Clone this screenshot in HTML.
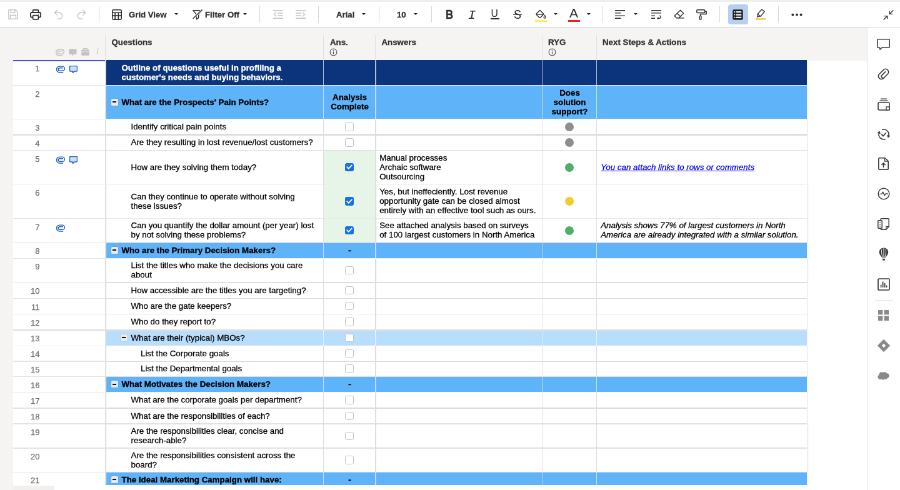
<!DOCTYPE html>
<html><head><meta charset="utf-8"><title>Sheet</title>
<style>
html,body{margin:0;padding:0;background:#fff;}
body{width:900px;height:490px;overflow:hidden;position:relative;font-family:"Liberation Sans",sans-serif;}
#clip{position:absolute;left:0;top:0;width:900px;height:490px;overflow:hidden;}
#app{position:absolute;left:0;top:0;width:1440px;height:784px;transform:scale(.625);transform-origin:0 0;will-change:transform;background:transparent;overflow:hidden;font-size:13.33px;color:#000;}
#topstrip{position:absolute;left:0;top:0;width:1440px;height:3px;background:#eceef2;}
#tb{position:absolute;left:0;top:3px;width:1440px;height:40px;background:#fff;border-bottom:1px solid #d6d6d6;}
#tb .i{position:absolute;top:0;}
#tb svg{position:absolute;overflow:visible;}
#tb .sep{position:absolute;top:6.500px;width:1.300px;height:26.500px;background:#d8d8d8;}
#tb .lbl{position:absolute;top:12.600px;-webkit-text-stroke:.3px;font-weight:bold;font-size:13.2px;line-height:16px;color:#333;white-space:nowrap;}
#tb .gl{position:absolute;color:#2f2f2f;white-space:nowrap;}
#tb .car{position:absolute;top:18px;width:0;height:0;border-left:3px solid transparent;border-right:3px solid transparent;border-top:3.800px solid #222;}
#hdr{position:absolute;left:0;top:44px;width:1387px;height:53px;background:#f5f4f2;}
#hdr .h{position:absolute;top:15.700px;-webkit-text-stroke:.3px;font-weight:bold;font-size:13.3px;line-height:16px;color:#333;white-space:nowrap;}
#hdr .vb{position:absolute;top:12px;height:40px;width:1px;background:#e2e1df;}
#hdr svg{position:absolute;}
#gutter{position:absolute;left:0;top:96px;width:21px;height:688px;background:#f5f4f2;}
#rpanel{position:absolute;left:1387px;top:44px;width:53px;height:740px;background:#fff;border-left:1px solid #e6e6e6;}
#rpanel svg{position:absolute;overflow:visible;}
.row{position:absolute;left:0;width:1292px;}
.rn{position:absolute;left:21px;top:0;width:148px;height:100%;background:#fff;}
.rn .num{position:absolute;right:105.500px;top:5.600px;font-size:13px;line-height:15px;color:#707070;-webkit-text-stroke:.25px;}
.rn .ri{position:absolute;top:9px;}
.bg{position:absolute;top:0;}
.c{position:absolute;top:0;bottom:1px;display:flex;align-items:center;overflow:hidden;}
.c.mid{justify-content:center;}
.vl{position:absolute;z-index:2;top:0;height:100%;width:1.200px;margin-left:.2px;background:#dedede;}
.hl{position:absolute;z-index:2;height:1.200px;margin-top:.2px;background:#dedede;}
.hl.rnh{background:#e4e4e4;}
.vl.rnv{background:#e0e0e0;}
.row.col .vl{background:rgba(255,255,255,.6);}
.row.dark .vl{background:rgba(255,255,255,.68);}
.row.col .vl.rnv,.row.dark .vl.rnv{background:#e0e0e0;}
.row.col .vl.endv,.row.dark .vl.endv{background:#ececec;}
.hl.chl{background:#eef0f2;height:1px;}
.t{display:block;position:relative;top:-.5px;line-height:15px;white-space:nowrap;-webkit-text-stroke:.3px;}
.t.ctr{text-align:center;}
.t a{color:#0000ee;text-decoration:underline;font-style:italic;}
.tog{position:absolute;top:50%;margin-top:-6px;width:11px;height:11px;background:#e9e9e9;border-radius:1.5px;box-shadow:0 0 0 .5px rgba(0,0,0,.12);}
.tog:after{content:"";position:absolute;left:2.5px;top:4.5px;width:6px;height:2px;background:#111;}
.cb{display:block;border:1.300px solid #c4c4c4;border-radius:2.400px;background:#fff;box-sizing:border-box;width:13.400px;height:13.400px;margin-left:-1px;margin-top:-.6px;}
.cb.on{background:#1272e8;border-color:#1272e8;position:relative;}
.cb.on svg{position:absolute;left:-1.600px;top:-1.600px;}
.ball{display:block;width:14px;height:14px;border-radius:50%;margin-left:-1px;}
#selline{position:absolute;left:21px;top:96.400px;width:148px;height:2px;background:#3f5fae;}
#botcover{z-index:3;position:absolute;left:21px;top:775.600px;width:1366px;height:9px;background:#fff;}
#hscroll{z-index:4;position:absolute;left:21px;top:776.500px;width:66px;height:8px;background:#f1f0ee;}
</style></head>
<body>
<div id="clip">
<div id="app">
<div id="topstrip"></div>
<div id="tb">
<svg style="left:12.5px;top:12px" width="16" height="16" viewBox="0 0 16 16"><path d="M1.5 .8h10.2l3.5 3.3v10.6a.6.6 0 0 1-.6.6H1.5a.6.6 0 0 1-.6-.6V1.4a.6.6 0 0 1 .6-.6z" fill="none" stroke="#c6c6c6" stroke-width="1.4"/><path d="M4.2 1v4.2h6.6V1M3.6 15V9.2h8.8V15" fill="none" stroke="#c6c6c6" stroke-width="1.4"/></svg>
<svg style="left:48px;top:11.5px" width="18" height="17" viewBox="0 0 18 17"><path d="M4.6 5V1.6a.8.8 0 0 1 .8-.8h7.2a.8.8 0 0 1 .8.8V5" fill="none" stroke="#2f2f2f" stroke-width="1.7"/><rect x=".9" y="5" width="16.2" height="7.6" rx="2" fill="none" stroke="#2f2f2f" stroke-width="1.8"/><rect x="4.6" y="9.6" width="8.8" height="6.2" rx=".8" fill="#fff" stroke="#2f2f2f" stroke-width="1.7"/><circle cx="14" cy="7.6" r=".9" fill="#2f2f2f"/></svg>
<svg style="left:86px;top:12px" width="16" height="16" viewBox="0 0 16 16"><path d="M1.6 5.2h7.2a5 5 0 0 1 0 10H6.2" fill="none" stroke="#c6c6c6" stroke-width="1.5" stroke-linecap="round"/><path d="M5.4 1.4L1.4 5.2l4 3.8" fill="none" stroke="#c6c6c6" stroke-width="1.5" stroke-linecap="round" stroke-linejoin="round"/></svg>
<svg style="left:121.5px;top:12px" width="16" height="16" viewBox="0 0 16 16"><path d="M14.4 5.2H7.2a5 5 0 0 0 0 10h2.6" fill="none" stroke="#c6c6c6" stroke-width="1.5" stroke-linecap="round"/><path d="M10.6 1.4l4 3.8-4 3.8" fill="none" stroke="#c6c6c6" stroke-width="1.5" stroke-linecap="round" stroke-linejoin="round"/></svg>
<div class="sep" style="left:158px"></div>
<svg style="left:179px;top:11.5px" width="16" height="17" viewBox="0 0 16 17"><rect x=".8" y=".8" width="14.4" height="15.4" rx="1.6" fill="none" stroke="#2f2f2f" stroke-width="1.6"/><path d="M.8 5.300h14.400M.8 10.100h14.400M5.100 5.300v10.900M10.400 5.300v10.900" stroke="#2f2f2f" stroke-width="1.600" fill="none"/></svg>
<div class="lbl" style="left:206px">Grid View</div>
<div class="car" style="left:278.5px"></div>
<svg style="left:307.5px;top:11.5px" width="16" height="17" viewBox="0 0 16 17"><path d="M.9 1.700h14.200L9.700 8.400v5.200l-3.200 2.200V8.400z" fill="none" stroke="#2f2f2f" stroke-width="1.4" stroke-linejoin="round"/><path d="M1 14.6L15 .8" stroke="#fff" stroke-width="3.2"/><path d="M1 14.6L15 .8" stroke="#2f2f2f" stroke-width="1.4" stroke-linecap="round"/></svg>
<div class="lbl" style="left:328px">Filter Off</div>
<div class="car" style="left:389px"></div>
<div class="sep" style="left:415px"></div>
<svg style="left:437px;top:13px" width="16" height="14" viewBox="0 0 16 14"><path d="M0 .7h16M7 5h9M7 9h9M0 13.3h16" stroke="#c6c6c6" stroke-width="1.4"/><path d="M4.4 4L1.4 7l3 3" fill="none" stroke="#c6c6c6" stroke-width="1.4" stroke-linecap="round" stroke-linejoin="round"/></svg>
<svg style="left:473px;top:13px" width="16" height="14" viewBox="0 0 16 14"><path d="M0 .7h16M0 5h9M0 9h9M0 13.3h16" stroke="#c6c6c6" stroke-width="1.4"/><path d="M11.6 4l3 3-3 3" fill="none" stroke="#c6c6c6" stroke-width="1.4" stroke-linecap="round" stroke-linejoin="round"/></svg>
<div class="sep" style="left:509px"></div>
<div class="lbl" style="left:538px">Arial</div>
<div class="car" style="left:578.5px"></div>
<div class="sep" style="left:606px"></div>
<div class="lbl" style="left:635px">10</div>
<div class="car" style="left:661.5px"></div>
<div class="sep" style="left:690px"></div>
<div class="lbl" style="left:712.500px;top:8px;font-size:19.500px;line-height:24px;color:#2f2f2f;transform:scaleX(.86);transform-origin:0 0">B</div>
<div class="gl" style="left:743px;top:9.600px;font:italic 21px/24px 'Liberation Mono',monospace;width:24px;text-align:center">I</div>
<div class="gl" style="left:781.300px;top:7.200px;font:15.800px/24px 'Liberation Sans',sans-serif;width:20px;text-align:center">U</div>
<div style="position:absolute;left:784.600px;top:26.200px;width:14px;height:1.500px;background:#2f2f2f"></div>
<div class="gl" style="left:817.500px;top:8px;font:20px/24px 'Liberation Sans',sans-serif;width:20px;text-align:center;transform:scaleX(.9)">S</div>
<div style="position:absolute;left:820.800px;top:19.800px;width:13.800px;height:1.500px;background:#2f2f2f"></div>
<svg style="left:857px;top:11.5px" width="17" height="15" viewBox="0 0 17 15"><path d="M6.400 1l6.600 6.600-5.400 5.400a1.200 1.200 0 0 1-1.700 0L1.400 8.500a1.200 1.200 0 0 1 0-1.700L6.400 1.800" fill="none" stroke="#2f2f2f" stroke-width="1.400" stroke-linejoin="round"/><path d="M1.200 8h11.400" stroke="#2f2f2f" stroke-width="1.300"/><path d="M14.600 9.600c1 1.400 1.600 2.300 1.600 3a1.600 1.600 0 0 1-3.200 0c0-.7.600-1.600 1.600-3z" fill="none" stroke="#2f2f2f" stroke-width="1.200"/></svg>
<div style="position:absolute;left:856px;top:29px;width:18.5px;height:3px;background:#fdf060"></div>
<div class="car" style="left:886.300px"></div>
<div class="gl" style="left:907.300px;top:6.200px;font:20px/24px 'Liberation Sans',sans-serif;width:22px;text-align:center;transform:scaleX(1.06)">A</div>
<div style="position:absolute;left:909px;top:29px;width:18.500px;height:3px;background:#e8222a"></div>
<div class="car" style="left:938.900px"></div>
<div class="sep" style="left:962.500px"></div>
<svg style="left:984px;top:13px" width="16" height="14" viewBox="0 0 16 14"><path d="M0 .7h16M0 4.900h9.500M0 9.100h16M0 13.300h9.500" stroke="#2f2f2f" stroke-width="1.400"/></svg>
<div class="car" style="left:1014.100px"></div>
<svg style="left:1042px;top:13px" width="16" height="14" viewBox="0 0 16 14"><path d="M0 .7h16M0 4.900h16M0 9.100h6M0 13.300h6" stroke="#2f2f2f" stroke-width="1.400"/><path d="M13 9.100a2.100 2.100 0 0 1 0 4.200H9.600" fill="none" stroke="#2f2f2f" stroke-width="1.400"/><path d="M11.400 11.200l-2.300 2.100 2.300 2.100z" fill="#2f2f2f"/></svg>
<svg style="left:1078px;top:12px" width="17" height="16" viewBox="0 0 17 16"><path d="M10.600 1.200l5 5-7.400 7.600H4.600L1.200 10.400z" fill="none" stroke="#2f2f2f" stroke-width="1.400" stroke-linejoin="round"/><path d="M5.400 6.200l5 5M8 13.900h8" stroke="#2f2f2f" stroke-width="1.400" stroke-linecap="round"/></svg>
<svg style="left:1113.5px;top:11.5px" width="18" height="17" viewBox="0 0 18 17"><rect x=".8" y=".8" width="13" height="4.800" rx="1.400" fill="none" stroke="#2f2f2f" stroke-width="1.500"/><path d="M13.800 3.200h2.400v4.400H6.600v3" fill="none" stroke="#2f2f2f" stroke-width="1.500" stroke-linejoin="round"/><rect x="5.400" y="10.600" width="2.600" height="5.400" rx=".8" fill="none" stroke="#2f2f2f" stroke-width="1.400"/></svg>
<div class="sep" style="left:1150.500px"></div>
<div style="position:absolute;left:1164.500px;top:4px;width:32px;height:32px;border-radius:4px;background:#b7d0ef"></div>
<svg style="left:1172px;top:11.5px" width="17" height="17" viewBox="0 0 17 17"><rect x=".3" y=".3" width="16.400" height="16.400" rx="2" fill="#222"/><path d="M5.600 4.200h8.600M5.600 8.500h8.600M5.600 12.800h8.600" stroke="#e9f0fa" stroke-width="2.300"/><circle cx="3.300" cy="4.200" r="1.100" fill="#e9f0fa"/><circle cx="3.300" cy="8.500" r="1.100" fill="#e9f0fa"/><circle cx="3.300" cy="12.800" r="1.100" fill="#e9f0fa"/></svg>
<svg style="left:1209px;top:10.5px" width="17" height="14" viewBox="0 0 17 14"><path d="M9.800 1l4.400 3.600-6 7.200-4.600.8-.4-4.200z" fill="none" stroke="#2f2f2f" stroke-width="1.400" stroke-linejoin="round"/><path d="M3.600 8.800l4.400 3.400M3.400 12.400l-1.600 1.400" stroke="#2f2f2f" stroke-width="1.300"/></svg>
<div style="position:absolute;left:1208.500px;top:26px;width:16.500px;height:2.800px;background:#f8d45c"></div>
<div class="sep" style="left:1245px"></div>
<svg style="left:1266px;top:18px" width="18" height="5" viewBox="0 0 18 5"><circle cx="2.400" cy="2.500" r="2" fill="#2f2f2f"/><circle cx="9" cy="2.500" r="2" fill="#2f2f2f"/><circle cx="15.600" cy="2.500" r="2" fill="#2f2f2f"/></svg>
<svg style="left:1412.5px;top:12.5px" width="17" height="16" viewBox="0 0 17 16"><path d="M16 .800l-5.600 5.400M10.200 2v4.400h4.600M1 15.200l5.600-5.400M6.800 14V9.600H2.200" fill="none" stroke="#2f2f2f" stroke-width="1.300" stroke-linecap="round" stroke-linejoin="round"/></svg>
</div>
<div id="hdr">
<div class="vb" style="left:168px"></div>
<div class="vb" style="left:517px"></div>
<div class="vb" style="left:600px"></div>
<div class="vb" style="left:867px"></div>
<div class="vb" style="left:954px"></div>
<div class="h" style="left:178.500px">Questions</div>
<div class="h" style="left:528px">Ans.</div>
<div class="h" style="left:610.500px">Answers</div>
<div class="h" style="left:877px">RYG</div>
<div class="h" style="left:964px">Next Steps &amp; Actions</div>
<svg style="left:527.1px;top:32.800px" width="13" height="13" viewBox="0 0 13 13"><circle cx="6.500" cy="6.500" r="5.400" fill="none" stroke="#555" stroke-width="1.100"/><path d="M6.500 5.800v3.400" stroke="#555" stroke-width="1.200" stroke-linecap="round"/><circle cx="6.500" cy="3.900" r=".75" fill="#555"/></svg>
<svg style="left:876.6px;top:32.800px" width="13" height="13" viewBox="0 0 13 13"><circle cx="6.500" cy="6.500" r="5.400" fill="none" stroke="#555" stroke-width="1.100"/><path d="M6.500 5.800v3.400" stroke="#555" stroke-width="1.200" stroke-linecap="round"/><circle cx="6.500" cy="3.900" r=".75" fill="#555"/></svg>
<svg style="left:89px;top:33.500px" width="15" height="12" viewBox="0 0 15 12"><path transform="translate(0 12) scale(1 -1)" d="M10.200 8.300H5.600a2.300 2.300 0 0 1 0-4.600h4.200a3.600 3.600 0 0 1 0 7.200H5.400a4.900 4.900 0 0 1 0-9.800h5.200" fill="none" stroke="#c2c2c2" stroke-width="1.500" stroke-linecap="round"/></svg>
<svg style="left:110px;top:33.500px" width="13" height="12" viewBox="0 0 13 12"><path d="M1.500 .5h10a1 1 0 0 1 1 1v6.500a1 1 0 0 1-1 1H7.600L5.600 11.600 5 9H1.500a1 1 0 0 1-1-1V1.500a1 1 0 0 1 1-1z" fill="#c2c2c2"/></svg>
<svg style="left:130px;top:33px" width="13" height="12" viewBox="0 0 13 12"><path d="M3.500 2.400V1.200a.8.800 0 0 1 .8-.8h4.400a.8.800 0 0 1 .8.800v1.200" fill="none" stroke="#c2c2c2" stroke-width="1.200"/><rect x=".2" y="2.600" width="12.600" height="9.200" rx="1.200" fill="#c2c2c2"/><path d="M.2 5.800h12.600" stroke="#f5f4f2" stroke-width=".7"/></svg>
<div style="position:absolute;left:154px;top:31px;font:italic 14px/16px 'Liberation Serif',serif;color:#c2c2c2">i</div>
</div>
<div id="gutter"></div>
<div class="row dark" style="top:96.48px;height:40.48px">
<div class="rn"><span class="num">1</span>
<svg class="ri" style="left:68.5px" width="15" height="12" viewBox="0 0 15 12"><path transform="translate(0 12) scale(1 -1)" d="M10.2 8.3H5.6a2.3 2.3 0 0 1 0-4.6h4.2a3.6 3.6 0 0 1 0 7.2H5.4a4.9 4.9 0 0 1 0-9.8h5.2" fill="none" stroke="#1d5fbf" stroke-width="1.45" stroke-linecap="round"/></svg>
<svg class="ri" style="left:89.5px" width="13" height="12" viewBox="0 0 13 12"><path d="M1.5 .5h10a1 1 0 0 1 1 1v6.5a1 1 0 0 1-1 1H7.6L5.6 11.6 5 9H1.5a1 1 0 0 1-1-1V1.5a1 1 0 0 1 1-1z" fill="#cfe2fb" stroke="#1d5fbf" stroke-width="1.5" stroke-linejoin="round"/></svg>
</div>
<div class="bg" style="left:169px;width:1122.4px;height:39.48px;background:#0b347d"></div>
<div class="c q" style="left:169px;width:349px"><span class="t" style="padding-left:25.5px;color:#fff;font-weight:bold">Outline of questions useful in profiling a<br>customer's needs and buying behaviors.</span></div>
<div class="c mid" style="left:518px;width:83px"></div>
<div class="c " style="left:601px;width:267px"></div>
<div class="c mid ryg" style="left:868px;width:87px"></div>
<div class="c last" style="left:955px;width:337px"></div>
<div class="vl rnv" style="left:168.16px"></div>
<div class="vl" style="left:516.96px"></div>
<div class="vl" style="left:600.16px"></div>
<div class="vl" style="left:867.36px"></div>
<div class="vl" style="left:953.76px"></div>
<div class="vl endv" style="left:1291.36px"></div>
<div class="hl rnh" style="left:21px;width:148px;top:39.18px"></div>
<div class="hl chl" style="left:169px;width:1122.4px;top:39.48px"></div>
</div>
<div class="row col" style="top:136.96px;height:54.24px">
<div class="rn"><span class="num">2</span>
</div>
<div class="bg" style="left:169px;width:1122.4px;height:53.24px;background:#5fb3f9"></div>
<div class="c q" style="left:169px;width:349px"><span class="tog" style="left:8.5px"></span><span class="t" style="padding-left:25.5px;color:#000;font-weight:bold">What are the Prospects' Pain Points?</span></div>
<div class="c mid" style="left:518px;width:83px"><span class="t ctr"><b>Analysis<br>Complete</b></span></div>
<div class="c " style="left:601px;width:267px"></div>
<div class="c mid ryg" style="left:868px;width:87px"><span class="t ctr"><b>Does<br>solution<br>support?</b></span></div>
<div class="c last" style="left:955px;width:337px"></div>
<div class="vl rnv" style="left:168.16px"></div>
<div class="vl" style="left:516.96px"></div>
<div class="vl" style="left:600.16px"></div>
<div class="vl" style="left:867.36px"></div>
<div class="vl" style="left:953.76px"></div>
<div class="vl endv" style="left:1291.36px"></div>
<div class="hl rnh" style="left:21px;width:148px;top:52.94px"></div>
<div class="hl chl" style="left:169px;width:1122.4px;top:53.24px"></div>
</div>
<div class="row w" style="top:191.2px;height:25.28px">
<div class="rn"><span class="num">3</span>
</div>
<div class="c q" style="left:169px;width:349px"><span class="t" style="padding-left:40.5px;color:#000;font-weight:normal">Identify critical pain points</span></div>
<div class="c mid" style="left:518px;width:83px"><span class="cb"></span></div>
<div class="c " style="left:601px;width:267px"></div>
<div class="c mid ryg" style="left:868px;width:87px"><span class="ball" style="background:#8e8e8e"></span></div>
<div class="c last" style="left:955px;width:337px"></div>
<div class="vl rnv" style="left:168.16px"></div>
<div class="vl" style="left:516.96px"></div>
<div class="vl" style="left:600.16px"></div>
<div class="vl" style="left:867.36px"></div>
<div class="vl" style="left:953.76px"></div>
<div class="vl endv" style="left:1291.36px"></div>
<div class="hl rnh" style="left:21px;width:148px;top:23.98px"></div>
<div class="hl" style="left:169px;width:1122.4px;top:23.98px"></div>
</div>
<div class="row w" style="top:216.48px;height:24.64px">
<div class="rn"><span class="num">4</span>
</div>
<div class="c q" style="left:169px;width:349px"><span class="t" style="padding-left:40.5px;color:#000;font-weight:normal">Are they resulting in lost revenue/lost customers?</span></div>
<div class="c mid" style="left:518px;width:83px"><span class="cb"></span></div>
<div class="c " style="left:601px;width:267px"></div>
<div class="c mid ryg" style="left:868px;width:87px"><span class="ball" style="background:#8e8e8e"></span></div>
<div class="c last" style="left:955px;width:337px"></div>
<div class="vl rnv" style="left:168.16px"></div>
<div class="vl" style="left:516.96px"></div>
<div class="vl" style="left:600.16px"></div>
<div class="vl" style="left:867.36px"></div>
<div class="vl" style="left:953.76px"></div>
<div class="vl endv" style="left:1291.36px"></div>
<div class="hl rnh" style="left:21px;width:148px;top:23.34px"></div>
<div class="hl" style="left:169px;width:1122.4px;top:23.34px"></div>
</div>
<div class="row w" style="top:241.12px;height:54.24px">
<div class="rn"><span class="num">5</span>
<svg class="ri" style="left:68.5px" width="15" height="12" viewBox="0 0 15 12"><path transform="translate(0 12) scale(1 -1)" d="M10.2 8.3H5.6a2.3 2.3 0 0 1 0-4.6h4.2a3.6 3.6 0 0 1 0 7.2H5.4a4.9 4.9 0 0 1 0-9.8h5.2" fill="none" stroke="#1d5fbf" stroke-width="1.45" stroke-linecap="round"/></svg>
<svg class="ri" style="left:89.5px" width="13" height="12" viewBox="0 0 13 12"><path d="M1.5 .5h10a1 1 0 0 1 1 1v6.5a1 1 0 0 1-1 1H7.6L5.6 11.6 5 9H1.5a1 1 0 0 1-1-1V1.5a1 1 0 0 1 1-1z" fill="#cfe2fb" stroke="#1d5fbf" stroke-width="1.5" stroke-linejoin="round"/></svg>
</div>
<div class="bg" style="left:518.4px;width:83.2px;height:53.24px;background:#e7f5e9"></div>
<div class="c q" style="left:169px;width:349px"><span class="t" style="padding-left:40.5px;color:#000;font-weight:normal">How are they solving them today?</span></div>
<div class="c mid" style="left:518px;width:83px"><span class="cb on"><svg width="14" height="14" viewBox="0 0 14 14"><path d="M3.2 7.2l2.6 2.6 5-5.4" fill="none" stroke="#fff" stroke-width="1.9" stroke-linecap="round" stroke-linejoin="round"/></svg></span></div>
<div class="c " style="left:601px;width:267px"><span class="t" style="padding-left:6.200px">Manual processes<br>Archaic software<br>Outsourcing</span></div>
<div class="c mid ryg" style="left:868px;width:87px"><span class="ball" style="background:#4db06a"></span></div>
<div class="c last" style="left:955px;width:337px"><span class="t" style="padding-left:6.200px"><a>You can attach links to rows or comments</a></span></div>
<div class="vl rnv" style="left:168.16px"></div>
<div class="vl" style="left:516.96px"></div>
<div class="vl" style="left:600.16px"></div>
<div class="vl" style="left:867.36px"></div>
<div class="vl" style="left:953.76px"></div>
<div class="vl endv" style="left:1291.36px"></div>
<div class="hl rnh" style="left:21px;width:148px;top:52.94px"></div>
<div class="hl" style="left:169px;width:1122.4px;top:52.94px"></div>
</div>
<div class="row w" style="top:295.36px;height:54.88px">
<div class="rn"><span class="num">6</span>
</div>
<div class="bg" style="left:518.4px;width:83.2px;height:53.88px;background:#e7f5e9"></div>
<div class="c q" style="left:169px;width:349px"><span class="t" style="padding-left:40.5px;color:#000;font-weight:normal">Can they continue to operate without solving<br>these issues?</span></div>
<div class="c mid" style="left:518px;width:83px"><span class="cb on"><svg width="14" height="14" viewBox="0 0 14 14"><path d="M3.2 7.2l2.6 2.6 5-5.4" fill="none" stroke="#fff" stroke-width="1.9" stroke-linecap="round" stroke-linejoin="round"/></svg></span></div>
<div class="c " style="left:601px;width:267px"><span class="t" style="padding-left:6.200px">Yes, but ineffeciently. Lost revenue<br>opportunity gate can be closed almost<br>entirely with an effective tool such as ours.</span></div>
<div class="c mid ryg" style="left:868px;width:87px"><span class="ball" style="background:#f6ca2c"></span></div>
<div class="c last" style="left:955px;width:337px"></div>
<div class="vl rnv" style="left:168.16px"></div>
<div class="vl" style="left:516.96px"></div>
<div class="vl" style="left:600.16px"></div>
<div class="vl" style="left:867.36px"></div>
<div class="vl" style="left:953.76px"></div>
<div class="vl endv" style="left:1291.36px"></div>
<div class="hl rnh" style="left:21px;width:148px;top:53.58px"></div>
<div class="hl" style="left:169px;width:1122.4px;top:53.58px"></div>
</div>
<div class="row w" style="top:350.24px;height:38.4px">
<div class="rn"><span class="num">7</span>
<svg class="ri" style="left:68.5px" width="15" height="12" viewBox="0 0 15 12"><path transform="translate(0 12) scale(1 -1)" d="M10.2 8.3H5.6a2.3 2.3 0 0 1 0-4.6h4.2a3.6 3.6 0 0 1 0 7.2H5.4a4.9 4.9 0 0 1 0-9.8h5.2" fill="none" stroke="#1d5fbf" stroke-width="1.45" stroke-linecap="round"/></svg>
</div>
<div class="bg" style="left:518.4px;width:83.2px;height:37.4px;background:#e7f5e9"></div>
<div class="c q" style="left:169px;width:349px"><span class="t" style="padding-left:40.5px;color:#000;font-weight:normal">Can you quantify the dollar amount (per year) lost<br>by not solving these problems?</span></div>
<div class="c mid" style="left:518px;width:83px"><span class="cb on"><svg width="14" height="14" viewBox="0 0 14 14"><path d="M3.2 7.2l2.6 2.6 5-5.4" fill="none" stroke="#fff" stroke-width="1.9" stroke-linecap="round" stroke-linejoin="round"/></svg></span></div>
<div class="c " style="left:601px;width:267px"><span class="t" style="padding-left:6.200px">See attached analysis based on surveys<br>of 100 largest customers in North America</span></div>
<div class="c mid ryg" style="left:868px;width:87px"><span class="ball" style="background:#4db06a"></span></div>
<div class="c last" style="left:955px;width:337px"><span class="t" style="padding-left:6.200px"><i>Analysis shows 77% of largest customers in North<br>America are already integrated with a similar solution.</i></span></div>
<div class="vl rnv" style="left:168.16px"></div>
<div class="vl" style="left:516.96px"></div>
<div class="vl" style="left:600.16px"></div>
<div class="vl" style="left:867.36px"></div>
<div class="vl" style="left:953.76px"></div>
<div class="vl endv" style="left:1291.36px"></div>
<div class="hl rnh" style="left:21px;width:148px;top:37.1px"></div>
<div class="hl" style="left:169px;width:1122.4px;top:37.1px"></div>
</div>
<div class="row col" style="top:388.64px;height:25.12px">
<div class="rn"><span class="num">8</span>
</div>
<div class="bg" style="left:169px;width:1122.4px;height:24.12px;background:#5fb3f9"></div>
<div class="c q" style="left:169px;width:349px"><span class="tog" style="left:8.5px"></span><span class="t" style="padding-left:25.5px;color:#000;font-weight:bold">Who are the Primary Decision Makers?</span></div>
<div class="c mid" style="left:518px;width:83px"><span class="t ctr"><b>-</b></span></div>
<div class="c " style="left:601px;width:267px"></div>
<div class="c mid ryg" style="left:868px;width:87px"></div>
<div class="c last" style="left:955px;width:337px"></div>
<div class="vl rnv" style="left:168.16px"></div>
<div class="vl" style="left:516.96px"></div>
<div class="vl" style="left:600.16px"></div>
<div class="vl" style="left:867.36px"></div>
<div class="vl" style="left:953.76px"></div>
<div class="vl endv" style="left:1291.36px"></div>
<div class="hl rnh" style="left:21px;width:148px;top:23.82px"></div>
<div class="hl chl" style="left:169px;width:1122.4px;top:24.12px"></div>
</div>
<div class="row w" style="top:413.76px;height:38.88px">
<div class="rn"><span class="num">9</span>
</div>
<div class="c q" style="left:169px;width:349px"><span class="t" style="padding-left:40.5px;color:#000;font-weight:normal">List the titles who make the decisions you care<br>about</span></div>
<div class="c mid" style="left:518px;width:83px"><span class="cb"></span></div>
<div class="c " style="left:601px;width:267px"></div>
<div class="c mid ryg" style="left:868px;width:87px"></div>
<div class="c last" style="left:955px;width:337px"></div>
<div class="vl rnv" style="left:168.16px"></div>
<div class="vl" style="left:516.96px"></div>
<div class="vl" style="left:600.16px"></div>
<div class="vl" style="left:867.36px"></div>
<div class="vl" style="left:953.76px"></div>
<div class="vl endv" style="left:1291.36px"></div>
<div class="hl rnh" style="left:21px;width:148px;top:37.58px"></div>
<div class="hl" style="left:169px;width:1122.4px;top:37.58px"></div>
</div>
<div class="row w" style="top:452.64px;height:25.28px">
<div class="rn"><span class="num">10</span>
</div>
<div class="c q" style="left:169px;width:349px"><span class="t" style="padding-left:40.5px;color:#000;font-weight:normal">How accessible are the titles you are targeting?</span></div>
<div class="c mid" style="left:518px;width:83px"><span class="cb"></span></div>
<div class="c " style="left:601px;width:267px"></div>
<div class="c mid ryg" style="left:868px;width:87px"></div>
<div class="c last" style="left:955px;width:337px"></div>
<div class="vl rnv" style="left:168.16px"></div>
<div class="vl" style="left:516.96px"></div>
<div class="vl" style="left:600.16px"></div>
<div class="vl" style="left:867.36px"></div>
<div class="vl" style="left:953.76px"></div>
<div class="vl endv" style="left:1291.36px"></div>
<div class="hl rnh" style="left:21px;width:148px;top:23.98px"></div>
<div class="hl" style="left:169px;width:1122.4px;top:23.98px"></div>
</div>
<div class="row w" style="top:477.92px;height:25.28px">
<div class="rn"><span class="num">11</span>
</div>
<div class="c q" style="left:169px;width:349px"><span class="t" style="padding-left:40.5px;color:#000;font-weight:normal">Who are the gate keepers?</span></div>
<div class="c mid" style="left:518px;width:83px"><span class="cb"></span></div>
<div class="c " style="left:601px;width:267px"></div>
<div class="c mid ryg" style="left:868px;width:87px"></div>
<div class="c last" style="left:955px;width:337px"></div>
<div class="vl rnv" style="left:168.16px"></div>
<div class="vl" style="left:516.96px"></div>
<div class="vl" style="left:600.16px"></div>
<div class="vl" style="left:867.36px"></div>
<div class="vl" style="left:953.76px"></div>
<div class="vl endv" style="left:1291.36px"></div>
<div class="hl rnh" style="left:21px;width:148px;top:23.98px"></div>
<div class="hl" style="left:169px;width:1122.4px;top:23.98px"></div>
</div>
<div class="row w" style="top:503.2px;height:25.28px">
<div class="rn"><span class="num">12</span>
</div>
<div class="c q" style="left:169px;width:349px"><span class="t" style="padding-left:40.5px;color:#000;font-weight:normal">Who do they report to?</span></div>
<div class="c mid" style="left:518px;width:83px"><span class="cb"></span></div>
<div class="c " style="left:601px;width:267px"></div>
<div class="c mid ryg" style="left:868px;width:87px"></div>
<div class="c last" style="left:955px;width:337px"></div>
<div class="vl rnv" style="left:168.16px"></div>
<div class="vl" style="left:516.96px"></div>
<div class="vl" style="left:600.16px"></div>
<div class="vl" style="left:867.36px"></div>
<div class="vl" style="left:953.76px"></div>
<div class="vl endv" style="left:1291.36px"></div>
<div class="hl rnh" style="left:21px;width:148px;top:23.98px"></div>
<div class="hl" style="left:169px;width:1122.4px;top:23.98px"></div>
</div>
<div class="row col" style="top:528.48px;height:25.28px">
<div class="rn"><span class="num">13</span>
</div>
<div class="bg" style="left:169px;width:1122.4px;height:24.28px;background:#b9ddfc"></div>
<div class="c q" style="left:169px;width:349px"><span class="tog" style="left:23.5px"></span><span class="t" style="padding-left:40.5px;color:#000;font-weight:normal">What are their (typical) MBOs?</span></div>
<div class="c mid" style="left:518px;width:83px"><span class="cb"></span></div>
<div class="c " style="left:601px;width:267px"></div>
<div class="c mid ryg" style="left:868px;width:87px"></div>
<div class="c last" style="left:955px;width:337px"></div>
<div class="vl rnv" style="left:168.16px"></div>
<div class="vl" style="left:516.96px"></div>
<div class="vl" style="left:600.16px"></div>
<div class="vl" style="left:867.36px"></div>
<div class="vl" style="left:953.76px"></div>
<div class="vl endv" style="left:1291.36px"></div>
<div class="hl rnh" style="left:21px;width:148px;top:23.98px"></div>
<div class="hl chl" style="left:169px;width:1122.4px;top:24.28px"></div>
</div>
<div class="row w" style="top:553.76px;height:24.8px">
<div class="rn"><span class="num">14</span>
</div>
<div class="c q" style="left:169px;width:349px"><span class="t" style="padding-left:56px;color:#000;font-weight:normal">List the Corporate goals</span></div>
<div class="c mid" style="left:518px;width:83px"><span class="cb"></span></div>
<div class="c " style="left:601px;width:267px"></div>
<div class="c mid ryg" style="left:868px;width:87px"></div>
<div class="c last" style="left:955px;width:337px"></div>
<div class="vl rnv" style="left:168.16px"></div>
<div class="vl" style="left:516.96px"></div>
<div class="vl" style="left:600.16px"></div>
<div class="vl" style="left:867.36px"></div>
<div class="vl" style="left:953.76px"></div>
<div class="vl endv" style="left:1291.36px"></div>
<div class="hl rnh" style="left:21px;width:148px;top:23.5px"></div>
<div class="hl" style="left:169px;width:1122.4px;top:23.5px"></div>
</div>
<div class="row w" style="top:578.56px;height:24.48px">
<div class="rn"><span class="num">15</span>
</div>
<div class="c q" style="left:169px;width:349px"><span class="t" style="padding-left:56px;color:#000;font-weight:normal">List the Departmental goals</span></div>
<div class="c mid" style="left:518px;width:83px"><span class="cb"></span></div>
<div class="c " style="left:601px;width:267px"></div>
<div class="c mid ryg" style="left:868px;width:87px"></div>
<div class="c last" style="left:955px;width:337px"></div>
<div class="vl rnv" style="left:168.16px"></div>
<div class="vl" style="left:516.96px"></div>
<div class="vl" style="left:600.16px"></div>
<div class="vl" style="left:867.36px"></div>
<div class="vl" style="left:953.76px"></div>
<div class="vl endv" style="left:1291.36px"></div>
<div class="hl rnh" style="left:21px;width:148px;top:23.18px"></div>
<div class="hl" style="left:169px;width:1122.4px;top:23.18px"></div>
</div>
<div class="row col" style="top:603.04px;height:25.28px">
<div class="rn"><span class="num">16</span>
</div>
<div class="bg" style="left:169px;width:1122.4px;height:24.28px;background:#5fb3f9"></div>
<div class="c q" style="left:169px;width:349px"><span class="tog" style="left:8.5px"></span><span class="t" style="padding-left:25.5px;color:#000;font-weight:bold">What Motivates the Decision Makers?</span></div>
<div class="c mid" style="left:518px;width:83px"><span class="t ctr"><b>-</b></span></div>
<div class="c " style="left:601px;width:267px"></div>
<div class="c mid ryg" style="left:868px;width:87px"></div>
<div class="c last" style="left:955px;width:337px"></div>
<div class="vl rnv" style="left:168.16px"></div>
<div class="vl" style="left:516.96px"></div>
<div class="vl" style="left:600.16px"></div>
<div class="vl" style="left:867.36px"></div>
<div class="vl" style="left:953.76px"></div>
<div class="vl endv" style="left:1291.36px"></div>
<div class="hl rnh" style="left:21px;width:148px;top:23.98px"></div>
<div class="hl chl" style="left:169px;width:1122.4px;top:24.28px"></div>
</div>
<div class="row w" style="top:628.32px;height:25.28px">
<div class="rn"><span class="num">17</span>
</div>
<div class="c q" style="left:169px;width:349px"><span class="t" style="padding-left:40.5px;color:#000;font-weight:normal">What are the corporate goals per department?</span></div>
<div class="c mid" style="left:518px;width:83px"><span class="cb"></span></div>
<div class="c " style="left:601px;width:267px"></div>
<div class="c mid ryg" style="left:868px;width:87px"></div>
<div class="c last" style="left:955px;width:337px"></div>
<div class="vl rnv" style="left:168.16px"></div>
<div class="vl" style="left:516.96px"></div>
<div class="vl" style="left:600.16px"></div>
<div class="vl" style="left:867.36px"></div>
<div class="vl" style="left:953.76px"></div>
<div class="vl endv" style="left:1291.36px"></div>
<div class="hl rnh" style="left:21px;width:148px;top:23.98px"></div>
<div class="hl" style="left:169px;width:1122.4px;top:23.98px"></div>
</div>
<div class="row w" style="top:653.6px;height:24.96px">
<div class="rn"><span class="num">18</span>
</div>
<div class="c q" style="left:169px;width:349px"><span class="t" style="padding-left:40.5px;color:#000;font-weight:normal">What are the responsibilities of each?</span></div>
<div class="c mid" style="left:518px;width:83px"><span class="cb"></span></div>
<div class="c " style="left:601px;width:267px"></div>
<div class="c mid ryg" style="left:868px;width:87px"></div>
<div class="c last" style="left:955px;width:337px"></div>
<div class="vl rnv" style="left:168.16px"></div>
<div class="vl" style="left:516.96px"></div>
<div class="vl" style="left:600.16px"></div>
<div class="vl" style="left:867.36px"></div>
<div class="vl" style="left:953.76px"></div>
<div class="vl endv" style="left:1291.36px"></div>
<div class="hl rnh" style="left:21px;width:148px;top:23.66px"></div>
<div class="hl" style="left:169px;width:1122.4px;top:23.66px"></div>
</div>
<div class="row w" style="top:678.56px;height:39.04px">
<div class="rn"><span class="num">19</span>
</div>
<div class="c q" style="left:169px;width:349px"><span class="t" style="padding-left:40.5px;color:#000;font-weight:normal">Are the responsibilities clear, concise and<br>research-able?</span></div>
<div class="c mid" style="left:518px;width:83px"><span class="cb"></span></div>
<div class="c " style="left:601px;width:267px"></div>
<div class="c mid ryg" style="left:868px;width:87px"></div>
<div class="c last" style="left:955px;width:337px"></div>
<div class="vl rnv" style="left:168.16px"></div>
<div class="vl" style="left:516.96px"></div>
<div class="vl" style="left:600.16px"></div>
<div class="vl" style="left:867.36px"></div>
<div class="vl" style="left:953.76px"></div>
<div class="vl endv" style="left:1291.36px"></div>
<div class="hl rnh" style="left:21px;width:148px;top:37.74px"></div>
<div class="hl" style="left:169px;width:1122.4px;top:37.74px"></div>
</div>
<div class="row w" style="top:717.6px;height:38.24px">
<div class="rn"><span class="num">20</span>
</div>
<div class="c q" style="left:169px;width:349px"><span class="t" style="padding-left:40.5px;color:#000;font-weight:normal">Are the responsibilities consistent across the<br>board?</span></div>
<div class="c mid" style="left:518px;width:83px"><span class="cb"></span></div>
<div class="c " style="left:601px;width:267px"></div>
<div class="c mid ryg" style="left:868px;width:87px"></div>
<div class="c last" style="left:955px;width:337px"></div>
<div class="vl rnv" style="left:168.16px"></div>
<div class="vl" style="left:516.96px"></div>
<div class="vl" style="left:600.16px"></div>
<div class="vl" style="left:867.36px"></div>
<div class="vl" style="left:953.76px"></div>
<div class="vl endv" style="left:1291.36px"></div>
<div class="hl rnh" style="left:21px;width:148px;top:36.94px"></div>
<div class="hl" style="left:169px;width:1122.4px;top:36.94px"></div>
</div>
<div class="row col" style="top:755.84px;height:24.96px">
<div class="rn"><span class="num">21</span>
</div>
<div class="bg" style="left:169px;width:1122.4px;height:23.96px;background:#5fb3f9"></div>
<div class="c q" style="left:169px;width:349px"><span class="tog" style="left:8.5px"></span><span class="t" style="padding-left:25.5px;color:#000;font-weight:bold">The Ideal Marketing Campaign will have:</span></div>
<div class="c mid" style="left:518px;width:83px"><span class="t ctr"><b>-</b></span></div>
<div class="c " style="left:601px;width:267px"></div>
<div class="c mid ryg" style="left:868px;width:87px"></div>
<div class="c last" style="left:955px;width:337px"></div>
<div class="vl rnv" style="left:168.16px"></div>
<div class="vl" style="left:516.96px"></div>
<div class="vl" style="left:600.16px"></div>
<div class="vl" style="left:867.36px"></div>
<div class="vl" style="left:953.76px"></div>
<div class="vl endv" style="left:1291.36px"></div>
<div class="hl rnh" style="left:21px;width:148px;top:23.66px"></div>
<div class="hl chl" style="left:169px;width:1122.4px;top:23.96px"></div>
</div>
<div id="selline"></div>
<div id="botcover"></div>
<div id="hscroll"></div>
<div id="rpanel">
<svg style="left:15.2px;top:17.5px" width="21" height="18" viewBox="0 0 21 18"><path d="M2 .800h17a1.200 1.200 0 0 1 1.200 1.200v11a1.200 1.200 0 0 1-1.200 1.200H8l-3 3-.6-3H2A1.200 1.200 0 0 1 .8 13V2A1.200 1.200 0 0 1 2 .800z" fill="none" stroke="#3a3a3a" stroke-width="1.500" stroke-linejoin="round"/></svg>
<svg style="left:15.2px;top:64.0px" width="21" height="21" viewBox="0 0 21 21"><g transform="rotate(-45 10.500 10.500) translate(.250 4.450)"><path d="M15 5.600H7.200a2.600 2.600 0 0 0 0 5.200H15a4.750 4.750 0 0 0 0-9.500H5.500a4.750 4.750 0 0 0 0 9.500h2" fill="none" stroke="#3a3a3a" stroke-width="1.700" stroke-linecap="round"/></g></svg>
<svg style="left:15.7px;top:113.0px" width="20" height="20" viewBox="0 0 20 20"><path d="M5.500 1.200h9M4 4.200h12" stroke="#3a3a3a" stroke-width="1.600" stroke-linecap="round"/><rect x="1" y="7" width="18" height="12" rx="2" fill="none" stroke="#3a3a3a" stroke-width="1.600"/><rect x="14" y="14" width="5" height="5" fill="#fff" stroke="#3a3a3a" stroke-width="1.400"/></svg>
<svg style="left:15.7px;top:160.5px" width="20" height="20" viewBox="0 0 20 20"><path d="M7.930 2.270A8 8 0 0 1 17.730 12.070M12.070 17.730A8 8 0 0 1 2.270 7.930" fill="none" stroke="#3a3a3a" stroke-width="1.600" stroke-linecap="round"/><path d="M16.900 15.360L19.950 12.470 15.510 11.270zM3.100 4.640L4.490 8.730 .05 7.530z" fill="#3a3a3a" stroke="#3a3a3a" stroke-width=".6" stroke-linejoin="round"/><path d="M6.600 10.200l2.500 2.400 4.300-4.800" fill="none" stroke="#3a3a3a" stroke-width="1.700" stroke-linecap="round" stroke-linejoin="round"/></svg>
<svg style="left:17.2px;top:207.5px" width="17" height="20" viewBox="0 0 17 20"><path d="M2 .800h8.800l5.400 5.200v12a1.200 1.200 0 0 1-1.200 1.200H2A1.200 1.200 0 0 1 .8 18V2A1.200 1.200 0 0 1 2 .800z" fill="none" stroke="#3a3a3a" stroke-width="1.500" stroke-linejoin="round"/><path d="M10.600 1v5.200H16" fill="none" stroke="#3a3a3a" stroke-width="1.300"/><path d="M8.500 15.500V9M5.800 11.400l2.700-2.700 2.700 2.700" fill="none" stroke="#3a3a3a" stroke-width="1.500" stroke-linecap="round" stroke-linejoin="round"/></svg>
<svg style="left:15.7px;top:256.0px" width="20" height="20" viewBox="0 0 20 20"><circle cx="10" cy="10" r="8.800" fill="none" stroke="#3a3a3a" stroke-width="1.500"/><path d="M3.800 10.400h3l1.800-3.400 2.600 6 1.800-3h3.200" fill="none" stroke="#3a3a3a" stroke-width="1.400" stroke-linejoin="round" stroke-linecap="round"/></svg>
<svg style="left:16.2px;top:305.0px" width="19" height="20" viewBox="0 0 19 20"><path d="M5 3.800V2a1.200 1.200 0 0 1 1.200-1.200H17A1.200 1.200 0 0 1 18.200 2v11.500l-4.500 4.700H6.200A1.200 1.200 0 0 1 5 17v-1" fill="none" stroke="#3a3a3a" stroke-width="1.500" stroke-linejoin="round"/><path d="M18 13.500h-4.300V18" fill="none" stroke="#3a3a3a" stroke-width="1.300"/><rect x=".8" y="3.800" width="6.400" height="12.400" rx="1" fill="#fff" stroke="#3a3a3a" stroke-width="1.500"/><path d="M3 7h2M3 10h2M3 13h2" stroke="#3a3a3a" stroke-width="1.100"/></svg>
<svg style="left:17.7px;top:351.5px" width="16" height="21" viewBox="0 0 16 21"><path d="M8 .5C3.600 .5 .8 3.700 .8 7.400c0 3.600 3 6.400 5 9.200h4.400c2-2.800 5-5.600 5-9.200C15.200 3.700 12.400 .5 8 .5z" fill="#3a3a3a"/><path d="M5.400 2.400C4 4.200 4 9.500 6.400 15.800M10.600 2.400c1.400 1.800 1.400 7.100-1 13.400M8 1v15" stroke="#fff" stroke-width="1" fill="none"/><rect x="6" y="17.800" width="4" height="2.700" rx=".6" fill="#3a3a3a"/></svg>
<svg style="left:15.7px;top:401.0px" width="20" height="20" viewBox="0 0 20 20"><rect x="1" y="1" width="18" height="18" rx="1.600" fill="none" stroke="#3a3a3a" stroke-width="1.700"/><path d="M5.600 15v-4.400M8.600 15V5.400M11.600 15V8M14.600 15v-3.400" stroke="#3a3a3a" stroke-width="1.700"/></svg>
<div style="position:absolute;left:12px;top:435.5px;width:29px;height:1px;background:#e4e4e4"></div>
<svg style="left:17.2px;top:452.0px" width="17" height="17" viewBox="0 0 17 17"><rect x="0" y="0" width="7.400" height="7.400" fill="#8a8a8a"/><rect x="9.600" y="0" width="7.400" height="7.400" fill="#8a8a8a"/><rect x="0" y="9.600" width="7.400" height="7.400" fill="#8a8a8a"/><rect x="9.600" y="9.600" width="7.400" height="7.400" fill="#8a8a8a"/></svg>
<svg style="left:15.7px;top:498.5px" width="20" height="20" viewBox="0 0 20 20"><path d="M10 -.200L20.200 10 10 20.200 -.2 10z" fill="#8a8a8a"/><path d="M10 6.800L13.200 10 10 13.200 6.800 10z" fill="#fff"/></svg>
<svg style="left:15.2px;top:549.5px" width="21" height="14" viewBox="0 0 21 14"><path d="M5.200 13.200a4 4 0 0 1-1.800-7.400A4.200 4.200 0 0 1 10 2a3.800 3.800 0 0 1 5.800 1.200 3.900 3.900 0 0 1 1.200 7.600 3.300 3.300 0 0 1-4.600 1.400 3.600 3.600 0 0 1-5.400.2 3.400 3.400 0 0 1-1.800.8z" fill="#8a8a8a"/></svg>
</div>
</div>
</div>
</body></html>
